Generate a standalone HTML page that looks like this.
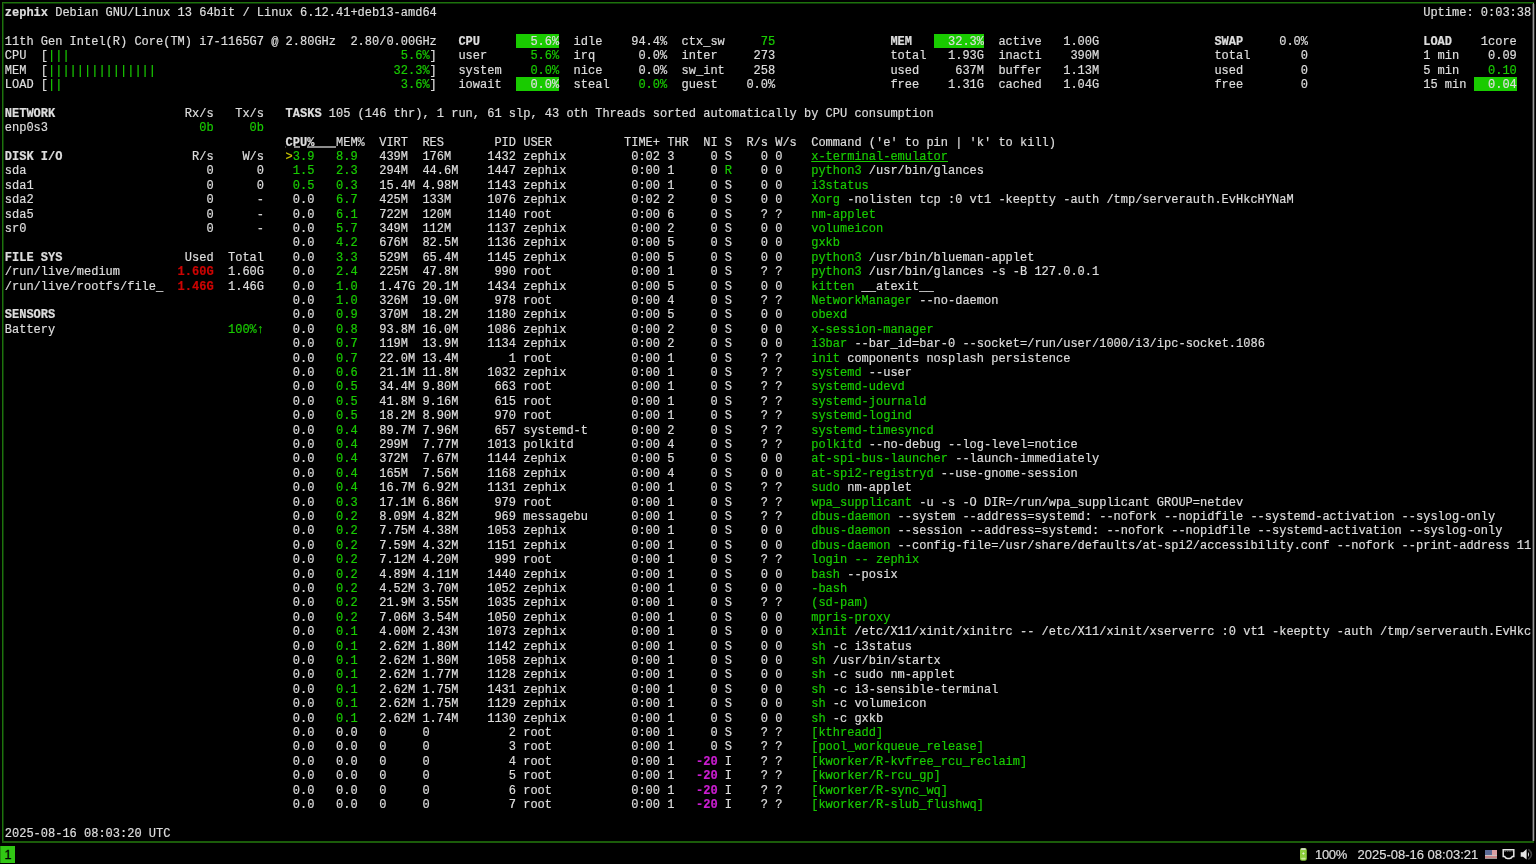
<!DOCTYPE html>
<html><head><meta charset="utf-8">
<style>
html,body{margin:0;padding:0;background:#000;width:1536px;height:864px;overflow:hidden;position:relative}
.row{position:absolute;left:0;height:14.4px;width:1536px}
.row span{position:absolute;top:1.2px;-webkit-text-stroke:0.2px currentColor;white-space:pre;font-family:"Liberation Mono",monospace;font-size:12px;line-height:14.4px;color:#dddddd}
.row span.b{font-weight:bold}
.row span.g{color:#19cb00}
.row span.y{color:#cecb00}
.row span.r{color:#cc0403}
.row span.m{color:#cb1ed1}
.row span.u{text-decoration:underline}
.row span.b.u{text-decoration-color:#8c8c8c;text-underline-offset:0px;text-decoration-thickness:2px}
.bx{position:absolute;height:14.4px;background:#19cb00}
.ln{position:absolute}
.bar{position:absolute;font-family:"Liberation Sans",sans-serif;font-size:12px;color:#dddddd;white-space:pre;line-height:14px}
</style></head><body>
<div class="ln" style="left:2px;top:2px;width:1532px;height:1px;background:#1e720c"></div>
<div class="ln" style="left:3px;top:3px;width:1530px;height:1px;background:#0c3806"></div>
<div class="ln" style="left:2px;top:2px;width:1px;height:841px;background:#1e720c"></div>
<div class="ln" style="left:3px;top:3px;width:1px;height:838px;background:#0c3806"></div>
<div class="ln" style="left:2px;top:841px;width:1532px;height:2px;background:#1b5c0a"></div>
<div class="ln" style="left:1532px;top:4px;width:1px;height:837px;background:#3c3c3c"></div>
<div class="ln" style="left:1533px;top:3px;width:1px;height:838px;background:#999999"></div>
<div class="ln" style="left:1534px;top:4px;width:1px;height:837px;background:#2a2a2a"></div>
<div id="term" style="position:absolute;left:0;top:0;width:1536px;height:864px;will-change:transform">
<div class="bx" style="left:516.0px;top:33.6px;width:43.2px"></div><div class="bx" style="left:516.0px;top:76.8px;width:43.2px"></div><div class="bx" style="left:933.6px;top:33.6px;width:50.4px"></div><div class="bx" style="left:1473.6px;top:76.8px;width:43.2px"></div>
<div class="row" style="top:4.8px"><span class="b" style="left:4.8px">zephix</span><span style="left:55.2px">Debian</span><span style="left:105.6px">GNU/Linux</span><span style="left:177.6px">13</span><span style="left:199.2px">64bit</span><span style="left:242.4px">/</span><span style="left:256.8px">Linux</span><span style="left:300.0px">6.12.41+deb13-amd64</span><span style="left:1423.2px">Uptime:</span><span style="left:1480.8px">0:03:38</span></div>
<div class="row" style="top:33.6px"><span style="left:4.8px">11th</span><span style="left:40.8px">Gen</span><span style="left:69.6px">Intel(R)</span><span style="left:134.4px">Core(TM)</span><span style="left:199.2px">i7-1165G7</span><span style="left:271.2px">@</span><span style="left:285.6px">2.80GHz</span><span style="left:350.4px">2.80/0.00GHz</span><span class="b" style="left:458.4px">CPU</span><span style="left:530.4px">5.6%</span><span style="left:573.6px">idle</span><span style="left:631.2px">94.4%</span><span style="left:681.6px">ctx_sw</span><span class="g" style="left:760.8px">75</span><span class="b" style="left:890.4px">MEM</span><span style="left:948.0px">32.3%</span><span style="left:998.4px">active</span><span style="left:1063.2px">1.00G</span><span class="b" style="left:1214.4px">SWAP</span><span style="left:1279.2px">0.0%</span><span class="b" style="left:1423.2px">LOAD</span><span style="left:1480.8px">1core</span></div>
<div class="row" style="top:48.0px"><span style="left:4.8px">CPU</span><span style="left:40.8px">[</span><span class="g" style="left:48.0px">|||</span><span class="g" style="left:400.8px">5.6%</span><span style="left:429.6px">]</span><span style="left:458.4px">user</span><span class="g" style="left:530.4px">5.6%</span><span style="left:573.6px">irq</span><span style="left:638.4px">0.0%</span><span style="left:681.6px">inter</span><span style="left:753.6px">273</span><span style="left:890.4px">total</span><span style="left:948.0px">1.93G</span><span style="left:998.4px">inacti</span><span style="left:1070.4px">390M</span><span style="left:1214.4px">total</span><span style="left:1300.8px">0</span><span style="left:1423.2px">1</span><span style="left:1437.6px">min</span><span style="left:1488.0px">0.09</span></div>
<div class="row" style="top:62.4px"><span style="left:4.8px">MEM</span><span style="left:40.8px">[</span><span class="g" style="left:48.0px">|||||||||||||||</span><span class="g" style="left:393.6px">32.3%</span><span style="left:429.6px">]</span><span style="left:458.4px">system</span><span class="g" style="left:530.4px">0.0%</span><span style="left:573.6px">nice</span><span style="left:638.4px">0.0%</span><span style="left:681.6px">sw_int</span><span style="left:753.6px">258</span><span style="left:890.4px">used</span><span style="left:955.2px">637M</span><span style="left:998.4px">buffer</span><span style="left:1063.2px">1.13M</span><span style="left:1214.4px">used</span><span style="left:1300.8px">0</span><span style="left:1423.2px">5</span><span style="left:1437.6px">min</span><span class="g" style="left:1488.0px">0.10</span></div>
<div class="row" style="top:76.8px"><span style="left:4.8px">LOAD</span><span style="left:40.8px">[</span><span class="g" style="left:48.0px">||</span><span class="g" style="left:400.8px">3.6%</span><span style="left:429.6px">]</span><span style="left:458.4px">iowait</span><span style="left:530.4px">0.0%</span><span style="left:573.6px">steal</span><span class="g" style="left:638.4px">0.0%</span><span style="left:681.6px">guest</span><span style="left:746.4px">0.0%</span><span style="left:890.4px">free</span><span style="left:948.0px">1.31G</span><span style="left:998.4px">cached</span><span style="left:1063.2px">1.04G</span><span style="left:1214.4px">free</span><span style="left:1300.8px">0</span><span style="left:1423.2px">15</span><span style="left:1444.8px">min</span><span style="left:1488.0px">0.04</span></div>
<div class="row" style="top:105.6px"><span class="b" style="left:4.8px">NETWORK</span><span style="left:184.8px">Rx/s</span><span style="left:235.2px">Tx/s</span><span class="b" style="left:285.6px">TASKS</span><span style="left:328.8px">105</span><span style="left:357.6px">(146</span><span style="left:393.6px">thr),</span><span style="left:436.8px">1</span><span style="left:451.2px">run,</span><span style="left:487.2px">61</span><span style="left:508.8px">slp,</span><span style="left:544.8px">43</span><span style="left:566.4px">oth</span><span style="left:595.2px">Threads</span><span style="left:652.8px">sorted</span><span style="left:703.2px">automatically</span><span style="left:804.0px">by</span><span style="left:825.6px">CPU</span><span style="left:854.4px">consumption</span></div>
<div class="row" style="top:120.0px"><span style="left:4.8px">enp0s3</span><span class="g" style="left:199.2px">0b</span><span class="g" style="left:249.6px">0b</span></div>
<div class="row" style="top:134.4px"><span class="b u" style="left:285.6px">CPU%   </span><span style="left:336.0px">MEM%</span><span style="left:379.2px">VIRT</span><span style="left:422.4px">RES</span><span style="left:494.4px">PID</span><span style="left:523.2px">USER</span><span style="left:624.0px">TIME+</span><span style="left:667.2px">THR</span><span style="left:703.2px">NI</span><span style="left:724.8px">S</span><span style="left:746.4px">R/s</span><span style="left:775.2px">W/s</span><span style="left:811.2px">Command</span><span style="left:868.8px">(&#x27;e&#x27;</span><span style="left:904.8px">to</span><span style="left:926.4px">pin</span><span style="left:955.2px">|</span><span style="left:969.6px">&#x27;k&#x27;</span><span style="left:998.4px">to</span><span style="left:1020.0px">kill)</span></div>
<div class="row" style="top:148.8px"><span class="b" style="left:4.8px">DISK</span><span class="b" style="left:40.8px">I/O</span><span style="left:192.0px">R/s</span><span style="left:242.4px">W/s</span><span class="y" style="left:285.6px">&gt;</span><span class="g" style="left:292.8px">3.9</span><span class="g" style="left:336.0px">8.9</span><span style="left:379.2px">439M</span><span style="left:422.4px">176M</span><span style="left:487.2px">1432</span><span style="left:523.2px">zephix</span><span style="left:631.2px">0:02</span><span style="left:667.2px">3</span><span style="left:710.4px">0</span><span style="left:724.8px">S</span><span style="left:760.8px">0</span><span style="left:775.2px">0</span><span class="g u" style="left:811.2px">x-terminal-emulator</span></div>
<div class="row" style="top:163.2px"><span style="left:4.8px">sda</span><span style="left:206.4px">0</span><span style="left:256.8px">0</span><span class="g" style="left:292.8px">1.5</span><span class="g" style="left:336.0px">2.3</span><span style="left:379.2px">294M</span><span style="left:422.4px">44.6M</span><span style="left:487.2px">1447</span><span style="left:523.2px">zephix</span><span style="left:631.2px">0:00</span><span style="left:667.2px">1</span><span style="left:710.4px">0</span><span class="g" style="left:724.8px">R</span><span style="left:760.8px">0</span><span style="left:775.2px">0</span><span class="g" style="left:811.2px">python3</span><span style="left:868.8px">/usr/bin/glances</span></div>
<div class="row" style="top:177.6px"><span style="left:4.8px">sda1</span><span style="left:206.4px">0</span><span style="left:256.8px">0</span><span class="g" style="left:292.8px">0.5</span><span class="g" style="left:336.0px">0.3</span><span style="left:379.2px">15.4M</span><span style="left:422.4px">4.98M</span><span style="left:487.2px">1143</span><span style="left:523.2px">zephix</span><span style="left:631.2px">0:00</span><span style="left:667.2px">1</span><span style="left:710.4px">0</span><span style="left:724.8px">S</span><span style="left:760.8px">0</span><span style="left:775.2px">0</span><span class="g" style="left:811.2px">i3status</span></div>
<div class="row" style="top:192.0px"><span style="left:4.8px">sda2</span><span style="left:206.4px">0</span><span style="left:256.8px">-</span><span style="left:292.8px">0.0</span><span class="g" style="left:336.0px">6.7</span><span style="left:379.2px">425M</span><span style="left:422.4px">133M</span><span style="left:487.2px">1076</span><span style="left:523.2px">zephix</span><span style="left:631.2px">0:02</span><span style="left:667.2px">2</span><span style="left:710.4px">0</span><span style="left:724.8px">S</span><span style="left:760.8px">0</span><span style="left:775.2px">0</span><span class="g" style="left:811.2px">Xorg</span><span style="left:847.2px">-nolisten</span><span style="left:919.2px">tcp</span><span style="left:948.0px">:0</span><span style="left:969.6px">vt1</span><span style="left:998.4px">-keeptty</span><span style="left:1063.2px">-auth</span><span style="left:1106.4px">/tmp/serverauth.EvHkcHYNaM</span></div>
<div class="row" style="top:206.4px"><span style="left:4.8px">sda5</span><span style="left:206.4px">0</span><span style="left:256.8px">-</span><span style="left:292.8px">0.0</span><span class="g" style="left:336.0px">6.1</span><span style="left:379.2px">722M</span><span style="left:422.4px">120M</span><span style="left:487.2px">1140</span><span style="left:523.2px">root</span><span style="left:631.2px">0:00</span><span style="left:667.2px">6</span><span style="left:710.4px">0</span><span style="left:724.8px">S</span><span style="left:760.8px">?</span><span style="left:775.2px">?</span><span class="g" style="left:811.2px">nm-applet</span></div>
<div class="row" style="top:220.8px"><span style="left:4.8px">sr0</span><span style="left:206.4px">0</span><span style="left:256.8px">-</span><span style="left:292.8px">0.0</span><span class="g" style="left:336.0px">5.7</span><span style="left:379.2px">349M</span><span style="left:422.4px">112M</span><span style="left:487.2px">1137</span><span style="left:523.2px">zephix</span><span style="left:631.2px">0:00</span><span style="left:667.2px">2</span><span style="left:710.4px">0</span><span style="left:724.8px">S</span><span style="left:760.8px">0</span><span style="left:775.2px">0</span><span class="g" style="left:811.2px">volumeicon</span></div>
<div class="row" style="top:235.2px"><span style="left:292.8px">0.0</span><span class="g" style="left:336.0px">4.2</span><span style="left:379.2px">676M</span><span style="left:422.4px">82.5M</span><span style="left:487.2px">1136</span><span style="left:523.2px">zephix</span><span style="left:631.2px">0:00</span><span style="left:667.2px">5</span><span style="left:710.4px">0</span><span style="left:724.8px">S</span><span style="left:760.8px">0</span><span style="left:775.2px">0</span><span class="g" style="left:811.2px">gxkb</span></div>
<div class="row" style="top:249.6px"><span class="b" style="left:4.8px">FILE</span><span class="b" style="left:40.8px">SYS</span><span style="left:184.8px">Used</span><span style="left:228.0px">Total</span><span style="left:292.8px">0.0</span><span class="g" style="left:336.0px">3.3</span><span style="left:379.2px">529M</span><span style="left:422.4px">65.4M</span><span style="left:487.2px">1145</span><span style="left:523.2px">zephix</span><span style="left:631.2px">0:00</span><span style="left:667.2px">5</span><span style="left:710.4px">0</span><span style="left:724.8px">S</span><span style="left:760.8px">0</span><span style="left:775.2px">0</span><span class="g" style="left:811.2px">python3</span><span style="left:868.8px">/usr/bin/blueman-applet</span></div>
<div class="row" style="top:264.0px"><span style="left:4.8px">/run/live/medium</span><span class="r b" style="left:177.6px">1.60G</span><span style="left:228.0px">1.60G</span><span style="left:292.8px">0.0</span><span class="g" style="left:336.0px">2.4</span><span style="left:379.2px">225M</span><span style="left:422.4px">47.8M</span><span style="left:494.4px">990</span><span style="left:523.2px">root</span><span style="left:631.2px">0:00</span><span style="left:667.2px">1</span><span style="left:710.4px">0</span><span style="left:724.8px">S</span><span style="left:760.8px">?</span><span style="left:775.2px">?</span><span class="g" style="left:811.2px">python3</span><span style="left:868.8px">/usr/bin/glances</span><span style="left:991.2px">-s</span><span style="left:1012.8px">-B</span><span style="left:1034.4px">127.0.0.1</span></div>
<div class="row" style="top:278.4px"><span style="left:4.8px">/run/live/rootfs/file_</span><span class="r b" style="left:177.6px">1.46G</span><span style="left:228.0px">1.46G</span><span style="left:292.8px">0.0</span><span class="g" style="left:336.0px">1.0</span><span style="left:379.2px">1.47G</span><span style="left:422.4px">20.1M</span><span style="left:487.2px">1434</span><span style="left:523.2px">zephix</span><span style="left:631.2px">0:00</span><span style="left:667.2px">5</span><span style="left:710.4px">0</span><span style="left:724.8px">S</span><span style="left:760.8px">0</span><span style="left:775.2px">0</span><span class="g" style="left:811.2px">kitten</span><span style="left:861.6px">__atexit__</span></div>
<div class="row" style="top:292.8px"><span style="left:292.8px">0.0</span><span class="g" style="left:336.0px">1.0</span><span style="left:379.2px">326M</span><span style="left:422.4px">19.0M</span><span style="left:494.4px">978</span><span style="left:523.2px">root</span><span style="left:631.2px">0:00</span><span style="left:667.2px">4</span><span style="left:710.4px">0</span><span style="left:724.8px">S</span><span style="left:760.8px">?</span><span style="left:775.2px">?</span><span class="g" style="left:811.2px">NetworkManager</span><span style="left:919.2px">--no-daemon</span></div>
<div class="row" style="top:307.2px"><span class="b" style="left:4.8px">SENSORS</span><span style="left:292.8px">0.0</span><span class="g" style="left:336.0px">0.9</span><span style="left:379.2px">370M</span><span style="left:422.4px">18.2M</span><span style="left:487.2px">1180</span><span style="left:523.2px">zephix</span><span style="left:631.2px">0:00</span><span style="left:667.2px">5</span><span style="left:710.4px">0</span><span style="left:724.8px">S</span><span style="left:760.8px">0</span><span style="left:775.2px">0</span><span class="g" style="left:811.2px">obexd</span></div>
<div class="row" style="top:321.6px"><span style="left:4.8px">Battery</span><span class="g" style="left:228.0px">100%↑</span><span style="left:292.8px">0.0</span><span class="g" style="left:336.0px">0.8</span><span style="left:379.2px">93.8M</span><span style="left:422.4px">16.0M</span><span style="left:487.2px">1086</span><span style="left:523.2px">zephix</span><span style="left:631.2px">0:00</span><span style="left:667.2px">2</span><span style="left:710.4px">0</span><span style="left:724.8px">S</span><span style="left:760.8px">0</span><span style="left:775.2px">0</span><span class="g" style="left:811.2px">x-session-manager</span></div>
<div class="row" style="top:336.0px"><span style="left:292.8px">0.0</span><span class="g" style="left:336.0px">0.7</span><span style="left:379.2px">119M</span><span style="left:422.4px">13.9M</span><span style="left:487.2px">1134</span><span style="left:523.2px">zephix</span><span style="left:631.2px">0:00</span><span style="left:667.2px">2</span><span style="left:710.4px">0</span><span style="left:724.8px">S</span><span style="left:760.8px">0</span><span style="left:775.2px">0</span><span class="g" style="left:811.2px">i3bar</span><span style="left:854.4px">--bar_id=bar-0</span><span style="left:962.4px">--socket=/run/user/1000/i3/ipc-socket.1086</span></div>
<div class="row" style="top:350.4px"><span style="left:292.8px">0.0</span><span class="g" style="left:336.0px">0.7</span><span style="left:379.2px">22.0M</span><span style="left:422.4px">13.4M</span><span style="left:508.8px">1</span><span style="left:523.2px">root</span><span style="left:631.2px">0:00</span><span style="left:667.2px">1</span><span style="left:710.4px">0</span><span style="left:724.8px">S</span><span style="left:760.8px">?</span><span style="left:775.2px">?</span><span class="g" style="left:811.2px">init</span><span style="left:847.2px">components</span><span style="left:926.4px">nosplash</span><span style="left:991.2px">persistence</span></div>
<div class="row" style="top:364.8px"><span style="left:292.8px">0.0</span><span class="g" style="left:336.0px">0.6</span><span style="left:379.2px">21.1M</span><span style="left:422.4px">11.8M</span><span style="left:487.2px">1032</span><span style="left:523.2px">zephix</span><span style="left:631.2px">0:00</span><span style="left:667.2px">1</span><span style="left:710.4px">0</span><span style="left:724.8px">S</span><span style="left:760.8px">?</span><span style="left:775.2px">?</span><span class="g" style="left:811.2px">systemd</span><span style="left:868.8px">--user</span></div>
<div class="row" style="top:379.2px"><span style="left:292.8px">0.0</span><span class="g" style="left:336.0px">0.5</span><span style="left:379.2px">34.4M</span><span style="left:422.4px">9.80M</span><span style="left:494.4px">663</span><span style="left:523.2px">root</span><span style="left:631.2px">0:00</span><span style="left:667.2px">1</span><span style="left:710.4px">0</span><span style="left:724.8px">S</span><span style="left:760.8px">?</span><span style="left:775.2px">?</span><span class="g" style="left:811.2px">systemd-udevd</span></div>
<div class="row" style="top:393.6px"><span style="left:292.8px">0.0</span><span class="g" style="left:336.0px">0.5</span><span style="left:379.2px">41.8M</span><span style="left:422.4px">9.16M</span><span style="left:494.4px">615</span><span style="left:523.2px">root</span><span style="left:631.2px">0:00</span><span style="left:667.2px">1</span><span style="left:710.4px">0</span><span style="left:724.8px">S</span><span style="left:760.8px">?</span><span style="left:775.2px">?</span><span class="g" style="left:811.2px">systemd-journald</span></div>
<div class="row" style="top:408.0px"><span style="left:292.8px">0.0</span><span class="g" style="left:336.0px">0.5</span><span style="left:379.2px">18.2M</span><span style="left:422.4px">8.90M</span><span style="left:494.4px">970</span><span style="left:523.2px">root</span><span style="left:631.2px">0:00</span><span style="left:667.2px">1</span><span style="left:710.4px">0</span><span style="left:724.8px">S</span><span style="left:760.8px">?</span><span style="left:775.2px">?</span><span class="g" style="left:811.2px">systemd-logind</span></div>
<div class="row" style="top:422.4px"><span style="left:292.8px">0.0</span><span class="g" style="left:336.0px">0.4</span><span style="left:379.2px">89.7M</span><span style="left:422.4px">7.96M</span><span style="left:494.4px">657</span><span style="left:523.2px">systemd-t</span><span style="left:631.2px">0:00</span><span style="left:667.2px">2</span><span style="left:710.4px">0</span><span style="left:724.8px">S</span><span style="left:760.8px">?</span><span style="left:775.2px">?</span><span class="g" style="left:811.2px">systemd-timesyncd</span></div>
<div class="row" style="top:436.8px"><span style="left:292.8px">0.0</span><span class="g" style="left:336.0px">0.4</span><span style="left:379.2px">299M</span><span style="left:422.4px">7.77M</span><span style="left:487.2px">1013</span><span style="left:523.2px">polkitd</span><span style="left:631.2px">0:00</span><span style="left:667.2px">4</span><span style="left:710.4px">0</span><span style="left:724.8px">S</span><span style="left:760.8px">?</span><span style="left:775.2px">?</span><span class="g" style="left:811.2px">polkitd</span><span style="left:868.8px">--no-debug</span><span style="left:948.0px">--log-level=notice</span></div>
<div class="row" style="top:451.2px"><span style="left:292.8px">0.0</span><span class="g" style="left:336.0px">0.4</span><span style="left:379.2px">372M</span><span style="left:422.4px">7.67M</span><span style="left:487.2px">1144</span><span style="left:523.2px">zephix</span><span style="left:631.2px">0:00</span><span style="left:667.2px">5</span><span style="left:710.4px">0</span><span style="left:724.8px">S</span><span style="left:760.8px">0</span><span style="left:775.2px">0</span><span class="g" style="left:811.2px">at-spi-bus-launcher</span><span style="left:955.2px">--launch-immediately</span></div>
<div class="row" style="top:465.6px"><span style="left:292.8px">0.0</span><span class="g" style="left:336.0px">0.4</span><span style="left:379.2px">165M</span><span style="left:422.4px">7.56M</span><span style="left:487.2px">1168</span><span style="left:523.2px">zephix</span><span style="left:631.2px">0:00</span><span style="left:667.2px">4</span><span style="left:710.4px">0</span><span style="left:724.8px">S</span><span style="left:760.8px">0</span><span style="left:775.2px">0</span><span class="g" style="left:811.2px">at-spi2-registryd</span><span style="left:940.8px">--use-gnome-session</span></div>
<div class="row" style="top:480.0px"><span style="left:292.8px">0.0</span><span class="g" style="left:336.0px">0.4</span><span style="left:379.2px">16.7M</span><span style="left:422.4px">6.92M</span><span style="left:487.2px">1131</span><span style="left:523.2px">zephix</span><span style="left:631.2px">0:00</span><span style="left:667.2px">1</span><span style="left:710.4px">0</span><span style="left:724.8px">S</span><span style="left:760.8px">?</span><span style="left:775.2px">?</span><span class="g" style="left:811.2px">sudo</span><span style="left:847.2px">nm-applet</span></div>
<div class="row" style="top:494.4px"><span style="left:292.8px">0.0</span><span class="g" style="left:336.0px">0.3</span><span style="left:379.2px">17.1M</span><span style="left:422.4px">6.86M</span><span style="left:494.4px">979</span><span style="left:523.2px">root</span><span style="left:631.2px">0:00</span><span style="left:667.2px">1</span><span style="left:710.4px">0</span><span style="left:724.8px">S</span><span style="left:760.8px">?</span><span style="left:775.2px">?</span><span class="g" style="left:811.2px">wpa_supplicant</span><span style="left:919.2px">-u</span><span style="left:940.8px">-s</span><span style="left:962.4px">-O</span><span style="left:984.0px">DIR=/run/wpa_supplicant</span><span style="left:1156.8px">GROUP=netdev</span></div>
<div class="row" style="top:508.8px"><span style="left:292.8px">0.0</span><span class="g" style="left:336.0px">0.2</span><span style="left:379.2px">8.09M</span><span style="left:422.4px">4.82M</span><span style="left:494.4px">969</span><span style="left:523.2px">messagebu</span><span style="left:631.2px">0:00</span><span style="left:667.2px">1</span><span style="left:710.4px">0</span><span style="left:724.8px">S</span><span style="left:760.8px">?</span><span style="left:775.2px">?</span><span class="g" style="left:811.2px">dbus-daemon</span><span style="left:897.6px">--system</span><span style="left:962.4px">--address=systemd:</span><span style="left:1099.2px">--nofork</span><span style="left:1164.0px">--nopidfile</span><span style="left:1250.4px">--systemd-activation</span><span style="left:1401.6px">--syslog-only</span></div>
<div class="row" style="top:523.2px"><span style="left:292.8px">0.0</span><span class="g" style="left:336.0px">0.2</span><span style="left:379.2px">7.75M</span><span style="left:422.4px">4.38M</span><span style="left:487.2px">1053</span><span style="left:523.2px">zephix</span><span style="left:631.2px">0:00</span><span style="left:667.2px">1</span><span style="left:710.4px">0</span><span style="left:724.8px">S</span><span style="left:760.8px">0</span><span style="left:775.2px">0</span><span class="g" style="left:811.2px">dbus-daemon</span><span style="left:897.6px">--session</span><span style="left:969.6px">--address=systemd:</span><span style="left:1106.4px">--nofork</span><span style="left:1171.2px">--nopidfile</span><span style="left:1257.6px">--systemd-activation</span><span style="left:1408.8px">--syslog-only</span></div>
<div class="row" style="top:537.6px"><span style="left:292.8px">0.0</span><span class="g" style="left:336.0px">0.2</span><span style="left:379.2px">7.59M</span><span style="left:422.4px">4.32M</span><span style="left:487.2px">1151</span><span style="left:523.2px">zephix</span><span style="left:631.2px">0:00</span><span style="left:667.2px">1</span><span style="left:710.4px">0</span><span style="left:724.8px">S</span><span style="left:760.8px">0</span><span style="left:775.2px">0</span><span class="g" style="left:811.2px">dbus-daemon</span><span style="left:897.6px">--config-file=/usr/share/defaults/at-spi2/accessibility.conf</span><span style="left:1336.8px">--nofork</span><span style="left:1401.6px">--print-address</span><span style="left:1516.8px">11</span></div>
<div class="row" style="top:552.0px"><span style="left:292.8px">0.0</span><span class="g" style="left:336.0px">0.2</span><span style="left:379.2px">7.12M</span><span style="left:422.4px">4.20M</span><span style="left:494.4px">999</span><span style="left:523.2px">root</span><span style="left:631.2px">0:00</span><span style="left:667.2px">1</span><span style="left:710.4px">0</span><span style="left:724.8px">S</span><span style="left:760.8px">?</span><span style="left:775.2px">?</span><span class="g" style="left:811.2px">login</span><span class="g" style="left:854.4px">--</span><span class="g" style="left:876.0px">zephix</span></div>
<div class="row" style="top:566.4px"><span style="left:292.8px">0.0</span><span class="g" style="left:336.0px">0.2</span><span style="left:379.2px">4.89M</span><span style="left:422.4px">4.11M</span><span style="left:487.2px">1440</span><span style="left:523.2px">zephix</span><span style="left:631.2px">0:00</span><span style="left:667.2px">1</span><span style="left:710.4px">0</span><span style="left:724.8px">S</span><span style="left:760.8px">0</span><span style="left:775.2px">0</span><span class="g" style="left:811.2px">bash</span><span style="left:847.2px">--posix</span></div>
<div class="row" style="top:580.8px"><span style="left:292.8px">0.0</span><span class="g" style="left:336.0px">0.2</span><span style="left:379.2px">4.52M</span><span style="left:422.4px">3.70M</span><span style="left:487.2px">1052</span><span style="left:523.2px">zephix</span><span style="left:631.2px">0:00</span><span style="left:667.2px">1</span><span style="left:710.4px">0</span><span style="left:724.8px">S</span><span style="left:760.8px">0</span><span style="left:775.2px">0</span><span class="g" style="left:811.2px">-bash</span></div>
<div class="row" style="top:595.2px"><span style="left:292.8px">0.0</span><span class="g" style="left:336.0px">0.2</span><span style="left:379.2px">21.9M</span><span style="left:422.4px">3.55M</span><span style="left:487.2px">1035</span><span style="left:523.2px">zephix</span><span style="left:631.2px">0:00</span><span style="left:667.2px">1</span><span style="left:710.4px">0</span><span style="left:724.8px">S</span><span style="left:760.8px">?</span><span style="left:775.2px">?</span><span class="g" style="left:811.2px">(sd-pam)</span></div>
<div class="row" style="top:609.6px"><span style="left:292.8px">0.0</span><span class="g" style="left:336.0px">0.2</span><span style="left:379.2px">7.06M</span><span style="left:422.4px">3.54M</span><span style="left:487.2px">1050</span><span style="left:523.2px">zephix</span><span style="left:631.2px">0:00</span><span style="left:667.2px">1</span><span style="left:710.4px">0</span><span style="left:724.8px">S</span><span style="left:760.8px">0</span><span style="left:775.2px">0</span><span class="g" style="left:811.2px">mpris-proxy</span></div>
<div class="row" style="top:624.0px"><span style="left:292.8px">0.0</span><span class="g" style="left:336.0px">0.1</span><span style="left:379.2px">4.00M</span><span style="left:422.4px">2.43M</span><span style="left:487.2px">1073</span><span style="left:523.2px">zephix</span><span style="left:631.2px">0:00</span><span style="left:667.2px">1</span><span style="left:710.4px">0</span><span style="left:724.8px">S</span><span style="left:760.8px">0</span><span style="left:775.2px">0</span><span class="g" style="left:811.2px">xinit</span><span style="left:854.4px">/etc/X11/xinit/xinitrc</span><span style="left:1020.0px">--</span><span style="left:1041.6px">/etc/X11/xinit/xserverrc</span><span style="left:1221.6px">:0</span><span style="left:1243.2px">vt1</span><span style="left:1272.0px">-keeptty</span><span style="left:1336.8px">-auth</span><span style="left:1380.0px">/tmp/serverauth.EvHkc</span></div>
<div class="row" style="top:638.4px"><span style="left:292.8px">0.0</span><span class="g" style="left:336.0px">0.1</span><span style="left:379.2px">2.62M</span><span style="left:422.4px">1.80M</span><span style="left:487.2px">1142</span><span style="left:523.2px">zephix</span><span style="left:631.2px">0:00</span><span style="left:667.2px">1</span><span style="left:710.4px">0</span><span style="left:724.8px">S</span><span style="left:760.8px">0</span><span style="left:775.2px">0</span><span class="g" style="left:811.2px">sh</span><span style="left:832.8px">-c</span><span style="left:854.4px">i3status</span></div>
<div class="row" style="top:652.8px"><span style="left:292.8px">0.0</span><span class="g" style="left:336.0px">0.1</span><span style="left:379.2px">2.62M</span><span style="left:422.4px">1.80M</span><span style="left:487.2px">1058</span><span style="left:523.2px">zephix</span><span style="left:631.2px">0:00</span><span style="left:667.2px">1</span><span style="left:710.4px">0</span><span style="left:724.8px">S</span><span style="left:760.8px">0</span><span style="left:775.2px">0</span><span class="g" style="left:811.2px">sh</span><span style="left:832.8px">/usr/bin/startx</span></div>
<div class="row" style="top:667.2px"><span style="left:292.8px">0.0</span><span class="g" style="left:336.0px">0.1</span><span style="left:379.2px">2.62M</span><span style="left:422.4px">1.77M</span><span style="left:487.2px">1128</span><span style="left:523.2px">zephix</span><span style="left:631.2px">0:00</span><span style="left:667.2px">1</span><span style="left:710.4px">0</span><span style="left:724.8px">S</span><span style="left:760.8px">0</span><span style="left:775.2px">0</span><span class="g" style="left:811.2px">sh</span><span style="left:832.8px">-c</span><span style="left:854.4px">sudo</span><span style="left:890.4px">nm-applet</span></div>
<div class="row" style="top:681.6px"><span style="left:292.8px">0.0</span><span class="g" style="left:336.0px">0.1</span><span style="left:379.2px">2.62M</span><span style="left:422.4px">1.75M</span><span style="left:487.2px">1431</span><span style="left:523.2px">zephix</span><span style="left:631.2px">0:00</span><span style="left:667.2px">1</span><span style="left:710.4px">0</span><span style="left:724.8px">S</span><span style="left:760.8px">0</span><span style="left:775.2px">0</span><span class="g" style="left:811.2px">sh</span><span style="left:832.8px">-c</span><span style="left:854.4px">i3-sensible-terminal</span></div>
<div class="row" style="top:696.0px"><span style="left:292.8px">0.0</span><span class="g" style="left:336.0px">0.1</span><span style="left:379.2px">2.62M</span><span style="left:422.4px">1.75M</span><span style="left:487.2px">1129</span><span style="left:523.2px">zephix</span><span style="left:631.2px">0:00</span><span style="left:667.2px">1</span><span style="left:710.4px">0</span><span style="left:724.8px">S</span><span style="left:760.8px">0</span><span style="left:775.2px">0</span><span class="g" style="left:811.2px">sh</span><span style="left:832.8px">-c</span><span style="left:854.4px">volumeicon</span></div>
<div class="row" style="top:710.4px"><span style="left:292.8px">0.0</span><span class="g" style="left:336.0px">0.1</span><span style="left:379.2px">2.62M</span><span style="left:422.4px">1.74M</span><span style="left:487.2px">1130</span><span style="left:523.2px">zephix</span><span style="left:631.2px">0:00</span><span style="left:667.2px">1</span><span style="left:710.4px">0</span><span style="left:724.8px">S</span><span style="left:760.8px">0</span><span style="left:775.2px">0</span><span class="g" style="left:811.2px">sh</span><span style="left:832.8px">-c</span><span style="left:854.4px">gxkb</span></div>
<div class="row" style="top:724.8px"><span style="left:292.8px">0.0</span><span style="left:336.0px">0.0</span><span style="left:379.2px">0</span><span style="left:422.4px">0</span><span style="left:508.8px">2</span><span style="left:523.2px">root</span><span style="left:631.2px">0:00</span><span style="left:667.2px">1</span><span style="left:710.4px">0</span><span style="left:724.8px">S</span><span style="left:760.8px">?</span><span style="left:775.2px">?</span><span class="g" style="left:811.2px">[kthreadd]</span></div>
<div class="row" style="top:739.2px"><span style="left:292.8px">0.0</span><span style="left:336.0px">0.0</span><span style="left:379.2px">0</span><span style="left:422.4px">0</span><span style="left:508.8px">3</span><span style="left:523.2px">root</span><span style="left:631.2px">0:00</span><span style="left:667.2px">1</span><span style="left:710.4px">0</span><span style="left:724.8px">S</span><span style="left:760.8px">?</span><span style="left:775.2px">?</span><span class="g" style="left:811.2px">[pool_workqueue_release]</span></div>
<div class="row" style="top:753.6px"><span style="left:292.8px">0.0</span><span style="left:336.0px">0.0</span><span style="left:379.2px">0</span><span style="left:422.4px">0</span><span style="left:508.8px">4</span><span style="left:523.2px">root</span><span style="left:631.2px">0:00</span><span style="left:667.2px">1</span><span class="m b" style="left:696.0px">-20</span><span style="left:724.8px">I</span><span style="left:760.8px">?</span><span style="left:775.2px">?</span><span class="g" style="left:811.2px">[kworker/R-kvfree_rcu_reclaim]</span></div>
<div class="row" style="top:768.0px"><span style="left:292.8px">0.0</span><span style="left:336.0px">0.0</span><span style="left:379.2px">0</span><span style="left:422.4px">0</span><span style="left:508.8px">5</span><span style="left:523.2px">root</span><span style="left:631.2px">0:00</span><span style="left:667.2px">1</span><span class="m b" style="left:696.0px">-20</span><span style="left:724.8px">I</span><span style="left:760.8px">?</span><span style="left:775.2px">?</span><span class="g" style="left:811.2px">[kworker/R-rcu_gp]</span></div>
<div class="row" style="top:782.4px"><span style="left:292.8px">0.0</span><span style="left:336.0px">0.0</span><span style="left:379.2px">0</span><span style="left:422.4px">0</span><span style="left:508.8px">6</span><span style="left:523.2px">root</span><span style="left:631.2px">0:00</span><span style="left:667.2px">1</span><span class="m b" style="left:696.0px">-20</span><span style="left:724.8px">I</span><span style="left:760.8px">?</span><span style="left:775.2px">?</span><span class="g" style="left:811.2px">[kworker/R-sync_wq]</span></div>
<div class="row" style="top:796.8px"><span style="left:292.8px">0.0</span><span style="left:336.0px">0.0</span><span style="left:379.2px">0</span><span style="left:422.4px">0</span><span style="left:508.8px">7</span><span style="left:523.2px">root</span><span style="left:631.2px">0:00</span><span style="left:667.2px">1</span><span class="m b" style="left:696.0px">-20</span><span style="left:724.8px">I</span><span style="left:760.8px">?</span><span style="left:775.2px">?</span><span class="g" style="left:811.2px">[kworker/R-slub_flushwq]</span></div>
<div class="row" style="top:825.6px"><span style="left:4.8px">2025-08-16</span><span style="left:84.0px">08:03:20</span><span style="left:148.8px">UTC</span></div>
</div>
<div class="ln" style="left:0;top:846px;width:15px;height:17px;background:#31c714"></div>
<div class="ln" style="left:0;top:846px;width:1px;height:17px;background:#24960f"></div>
<div class="bar" style="left:4.5px;top:847.5px;color:#000;font-size:12.5px;-webkit-text-stroke:0.3px #000">1</div>
<div class="bar" style="left:1315px;top:847.5px;font-size:13px;letter-spacing:-0.3px;-webkit-text-stroke:0.2px #ddd">100%</div>
<div class="bar" style="left:1357.5px;top:847.5px;font-size:13px;-webkit-text-stroke:0.2px #ddd">2025-08-16 08:03:21</div>
<svg style="position:absolute;left:1280px;top:843px" width="256" height="21" viewBox="1280 843 256 21">
 <rect x="1300" y="848" width="6.8" height="12.7" rx="2" fill="#8ccd3c"/>
 <rect x="1301" y="848.3" width="4.8" height="1.8" rx="0.9" fill="#d6dccd"/>
 <rect x="1301.2" y="857.8" width="4.4" height="1.6" rx="0.8" fill="#c8ec9a"/>
 <path d="M1303.4 852.4 v2.2 M1302.3 853.5 h2.2" stroke="#e8f2dc" stroke-width="0.9"/>
 <rect x="1485" y="850" width="12" height="8.8" fill="#d9a0a4"/>
 <rect x="1485" y="850" width="7" height="5" fill="#5b6a95"/>
 <rect x="1485" y="855" width="12" height="1.2" fill="#c9c2c2"/>
 <rect x="1485" y="856.2" width="12" height="1.6" fill="#c97a7c"/>
 <rect x="1485" y="857.8" width="12" height="1" fill="#9a9a98"/>
 <path d="M1503.2 849.7 H1513.8 V856.6 H1512.3 Q1511.4 858.4 1509.5 858.4 H1507.5 Q1505.6 858.4 1504.7 856.6 H1503.2 Z" fill="none" stroke="#e6e6e6" stroke-width="1.5"/>
 <path d="M1504.4 851.1 H1512.6" stroke="#8a8a8a" stroke-width="1" stroke-dasharray="1.6 0.8"/>
 <path d="M1520.7 852.3 H1523 L1526.6 849.1 V859.5 L1523 856.8 H1520.7 Z" fill="#e6e6e6"/>
 <path d="M1528 852 Q1530.2 854.4 1528 856.9 Z" fill="#dddddd"/>
 <path d="M1528.4 849.3 Q1534.6 854.4 1528.4 859.5" fill="none" stroke="#444444" stroke-width="1.5"/>
</svg>
</body></html>
